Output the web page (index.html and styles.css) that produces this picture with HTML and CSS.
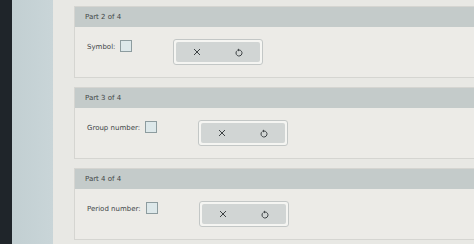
FILE: index.html
```html
<!DOCTYPE html>
<html lang="en">
<head>
    <meta charset="UTF-8">
    <title>Parts</title>
    <link rel="stylesheet" href="styles.css">
</head>
<body>
    <div class="bezel"></div>
    <div class="sidebar"></div>
    <div class="main">
        <div class="card">
            <div class="card-head">Part 2 of 4</div>
            <div class="card-body">
                <span class="label">Symbol:</span>
                <span class="answer"></span>
                <div class="tools">
                    <button class="tool" title="Clear">
                        <svg width="8" height="8" viewBox="0 0 8 8"><path d="M1 1 L7 7 M7 1 L1 7" stroke="#3d4244" stroke-width="1"/></svg>
                    </button>
                    <button class="tool" title="Undo">
                        <svg width="8" height="9" viewBox="0 0 8 9"><path d="M2.2 2.6 A3 3 0 1 0 4 2" fill="none" stroke="#3d4244" stroke-width="1"/><path d="M4 0.4 L4 3.6 L2.2 2 Z" fill="#3d4244"/></svg>
                    </button>
                </div>
            </div>
        </div>
        <div class="card">
            <div class="card-head">Part 3 of 4</div>
            <div class="card-body">
                <span class="label">Group number:</span>
                <span class="answer"></span>
                <div class="tools">
                    <button class="tool" title="Clear">
                        <svg width="8" height="8" viewBox="0 0 8 8"><path d="M1 1 L7 7 M7 1 L1 7" stroke="#3d4244" stroke-width="1"/></svg>
                    </button>
                    <button class="tool" title="Undo">
                        <svg width="8" height="9" viewBox="0 0 8 9"><path d="M2.2 2.6 A3 3 0 1 0 4 2" fill="none" stroke="#3d4244" stroke-width="1"/><path d="M4 0.4 L4 3.6 L2.2 2 Z" fill="#3d4244"/></svg>
                    </button>
                </div>
            </div>
        </div>
        <div class="card">
            <div class="card-head">Part 4 of 4</div>
            <div class="card-body">
                <span class="label">Period number:</span>
                <span class="answer"></span>
                <div class="tools">
                    <button class="tool" title="Clear">
                        <svg width="8" height="8" viewBox="0 0 8 8"><path d="M1 1 L7 7 M7 1 L1 7" stroke="#3d4244" stroke-width="1"/></svg>
                    </button>
                    <button class="tool" title="Undo">
                        <svg width="8" height="9" viewBox="0 0 8 9"><path d="M2.2 2.6 A3 3 0 1 0 4 2" fill="none" stroke="#3d4244" stroke-width="1"/><path d="M4 0.4 L4 3.6 L2.2 2 Z" fill="#3d4244"/></svg>
                    </button>
                </div>
            </div>
        </div>
    </div>
</body>
</html>
```

FILE: styles.css
```css
html, body {
    margin: 0;
    height: 100%;
}
body {
    display: flex;
    background: #e8e8e4;
    font-family: 'DejaVu Sans', Verdana, sans-serif;
    font-size: 7px;
    color: #414647;
    overflow: hidden;
}
.bezel {
    width: 12px;
    flex-shrink: 0;
    background: #1f252a;
}
.sidebar {
    width: 41px;
    flex-shrink: 0;
    background: linear-gradient(to right, #c2cfd2, #c9d5d8);
}
.main {
    flex: 1;
    padding: 6px 0 0 21px;
    display: flex;
    flex-direction: column;
    gap: 9px;
}
.card {
    border: 1px solid #d5d5d1;
    border-right: none;
    background: #ecebe7;
}
.card-head {
    height: 20px;
    line-height: 20px;
    padding-left: 10px;
    background: #c4cbca;
}
.card-body {
    height: 50px;
    box-sizing: border-box;
    padding: 12px 0 0 12px;
    display: flex;
    align-items: flex-start;
}
.label {
    margin-top: 2px;
    line-height: 12px;
}
.answer {
    width: 10px;
    height: 10px;
    margin: 1px 0 0 5px;
    border: 1px solid #8d9c9f;
    background: #dde8ea;
}
.tools {
    margin-left: 41px;
    display: flex;
    padding: 2px;
    border: 1px solid #c3c7c6;
    border-radius: 3px;
    background: #f5f5f2;
}
.tool {
    width: 42px;
    height: 20px;
    padding: 0;
    border: none;
    background: #d1d5d4;
    display: flex;
    align-items: center;
    justify-content: center;
}
.tool:first-child {
    border-radius: 2px 0 0 2px;
}
.tool:last-child {
    border-radius: 0 2px 2px 0;
}
```
